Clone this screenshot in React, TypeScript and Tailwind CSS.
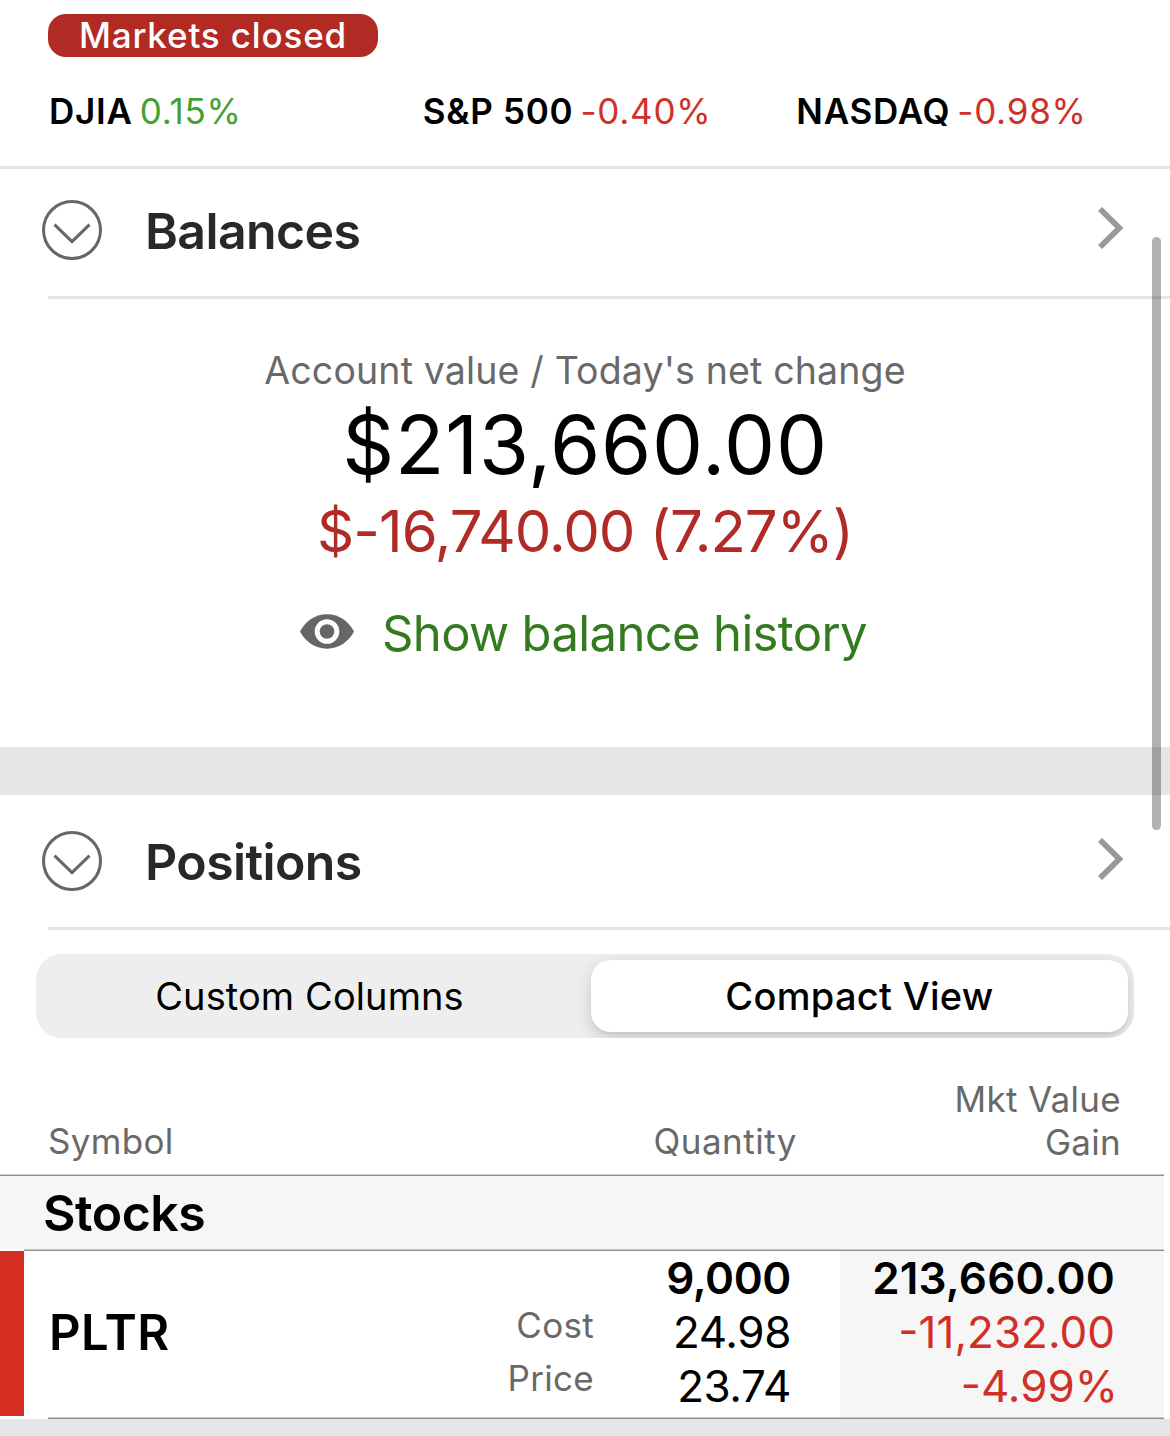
import type { ReactNode } from "react";

type Quote = {
    name: string
    change: string
}

const quotes: Quote[] = [
    { name: 'DJIA', change: '0.15%' },
    { name: 'S&P 500', change: '-0.40%' },
    { name: 'NASDAQ', change: '-0.98%' },
]

const CollapseIcon = () => (
    <svg width="60" height="60" viewBox="0 0 60 60" fill="none" stroke="#666666" strokeWidth="3">
        <circle cx="30" cy="30" r="28.5" />
        <path d="M12.500 24.600 L30 41.600 L47.500 24.600" />
    </svg>
)

const ArrowIcon = () => (
    <svg width="26" height="42" viewBox="0 0 26 42" fill="none" stroke="#999999" strokeWidth="5.8">
        <path d="M2 2 L21.300 21 L2 40" />
    </svg>
)

const EyeIcon = () => (
    <svg width="54" height="35" viewBox="0 0 54 35">
        <path fill="#666666" d="M0 17.500 C5 8 14.500 0.300 27 0.300 C39.500 0.300 49 8 54 17.500 C49 27 39.500 34.700 27 34.700 C14.500 34.700 5 27 0 17.500 Z" />
        <circle cx="27" cy="17.500" r="9.800" fill="#666666" stroke="#ffffff" strokeWidth="5" />
    </svg>
)

const SectionHeader = ({ title, className }: { title: string, className: string }) => (
    <div className={className}>
        <CollapseIcon />
        <h2 className="ml-[43px] mt-[2px] flex-1 text-[50px] leading-[60px] font-semibold tracking-[-0.6px] text-[#282828]">{title}</h2>
        <span className="mb-1"><ArrowIcon /></span>
    </div>
)

const Divider = () => <div className="ml-12 h-[3px] bg-[#e5e5e5]"></div>

// hairline separator, lighter on its upper pixel
const Hairline = ({ className = '' }: { className?: string }) => (
    <div className={`h-[2px] border-t border-b border-t-[#cbcbcb] border-b-[#8f8f8f] ${className}`}></div>
)

const Balances = () => (
    <section>
        <SectionHeader title="Balances" className="flex h-[127px] items-center pb-[5px] pl-[42px] pr-[46px]" />
        <Divider />
        <div className="flex h-[448px] flex-col items-center pt-[48px]">
            <p className="text-[37.5px] leading-[48px] tracking-[0.15px] text-[#696969]">Account value / Today's net change</p>
            <p className="text-[81px] leading-[101px] tracking-[0.8px] text-black">$213,660.00</p>
            <p className="text-[58px] leading-[70px] tracking-[-0.95px] text-[#b12b26]">$-16,740.00 (7.27%)</p>
            <a className="flex h-[136px] items-center gap-[28px] pr-[3px] text-[49px] leading-[60px] tracking-[-0.65px] text-[#347a1f]">
                <span className="mb-[6px]"><EyeIcon /></span>
                Show balance history
            </a>
        </div>
    </section>
)

const ViewSwitch = () => (
    <div className="mx-9 mt-6 flex h-[84px] overflow-hidden rounded-[26px] bg-[#eeeeee] p-[6px] text-[38px] text-black">
        <button className="flex-1 pr-[14px] pt-[1px] tracking-[0.1px]">Custom Columns</button>
        <button className="w-[537px] rounded-[20px] bg-white pt-[1px] font-medium tracking-[0.3px] shadow-[0_6px_18px_rgba(0,0,0,0.15),0_3px_3px_rgba(0,0,0,0.05)]">Compact View</button>
    </div>
)

const Column = ({ className, children }: { className: string, children: ReactNode }) => (
    <div className={className}>{children}</div>
)

const Positions = () => (
    <section>
        <SectionHeader title="Positions" className="flex h-[132px] items-center pl-[42px] pr-[46px]" />
        <Divider />
        <ViewSwitch />

        <div className="flex h-[136px] items-end pb-[10px] text-[35px] leading-[43px] tracking-[0.3px] text-[#696969]">
            <p className="w-[400px] pb-[1px] pl-12">Symbol</p>
            <p className="w-[397px] pb-[1px] text-right tracking-[0.5px]">Quantity</p>
            <p className="w-[324px] text-right">Mkt Value<br />Gain</p>
        </div>

        <div className="mr-[6px]">
            <Hairline />
            <h3 className="h-[73px] bg-[#f6f6f6] pl-[43px] text-[50px] leading-[74px] font-semibold tracking-[-0.5px] text-black">Stocks</h3>
            <Hairline className="ml-6" />
            <div className="flex h-[166px] text-[44px] leading-[54px] text-black">
                <div className="h-[165px] w-6 bg-[#d42d22]"></div>
                <h4 className="w-[316px] pl-[25px] text-[49px] leading-[163px] font-semibold tracking-[0.4px]">PLTR</h4>
                <Column className="w-[254px] pt-[48px] text-right text-[35px] leading-[53px] tracking-[0.3px] text-[#696969]">
                    <p>Cost</p>
                    <p>Price</p>
                </Column>
                <Column className="w-[246px] pr-[49px] text-right tracking-[-0.4px]">
                    <p className="font-semibold">9,000</p>
                    <p>24.98</p>
                    <p>23.74</p>
                </Column>
                <Column className="w-[324px] bg-[#f6f6f6] pr-[49px] text-right">
                    <p className="font-semibold tracking-[0.2px]">213,660.00</p>
                    <p className="text-[#d03028]">-11,232.00</p>
                    <p className="-mr-[3px] text-[#d03028]">-4.99%</p>
                </Column>
            </div>
            <Hairline className="ml-12" />
        </div>
    </section>
)

const App = () => {
    return (
        <main className="relative h-[1436px] w-[1170px] overflow-hidden bg-white pt-[14px] font-['Inter',sans-serif]">
            <div className="ml-12 flex h-[43px] w-[330px] items-center justify-center rounded-[18px] bg-[#b12b24] text-[35px] font-medium tracking-[0.85px] text-white">
                Markets closed
            </div>

            <div className="flex h-[109px] items-center pl-[49px] text-[35px]">
                {quotes.map((q) => (
                    <p key={q.name} className="w-[374px] whitespace-nowrap tracking-[0.75px]">
                        <span className="mr-[7px] font-semibold text-black">{q.name}</span>
                        <span className={q.change.startsWith('-') ? 'text-[#d03028]' : 'text-[#449f31]'}>{q.change}</span>
                    </p>
                ))}
            </div>
            <div className="h-[3px] bg-[#e5e5e5]"></div>

            <Balances />
            <div className="h-12 bg-[#e5e6e8]"></div>
            <Positions />
            <div className="h-[17px] bg-[#e5e6e8]"></div>

            {/* scroll indicator */}
            <div className="absolute left-[1152px] top-[237px] h-[593px] w-[9px] rounded-full bg-black/30"></div>
        </main>
    )
}

export default App;
